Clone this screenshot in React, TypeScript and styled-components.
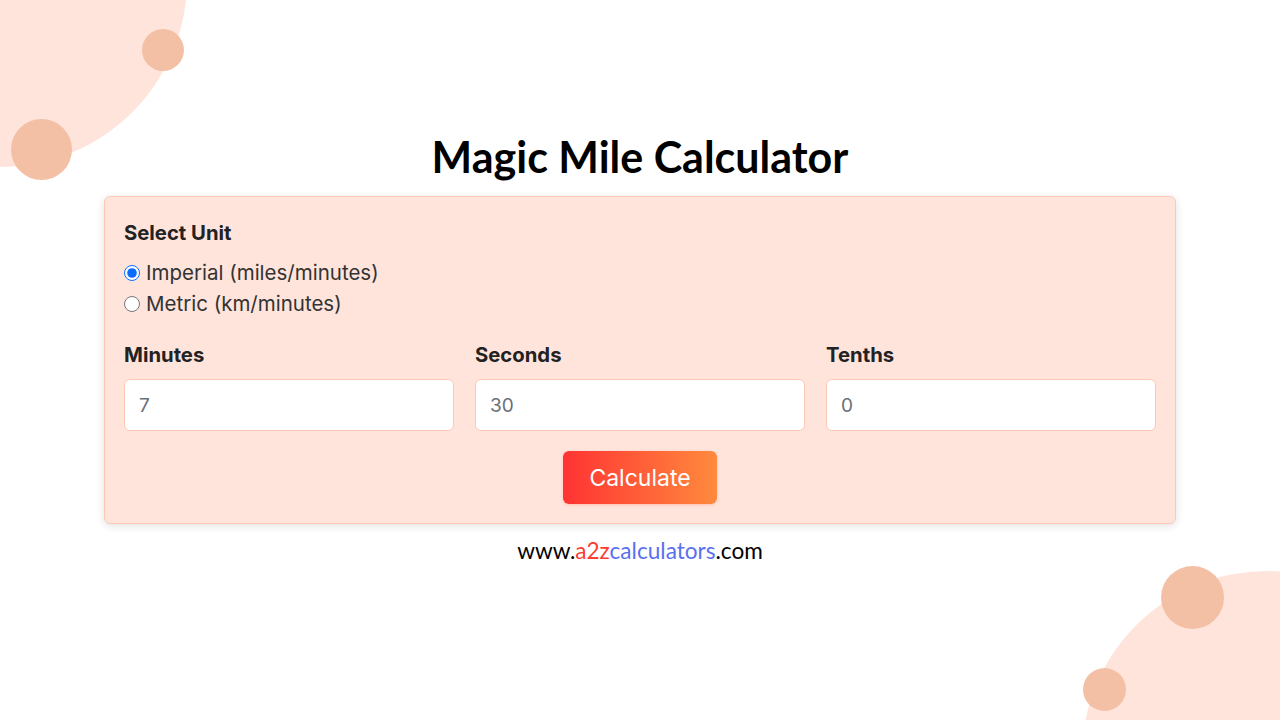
import React, { useState } from 'react'
import styled, { createGlobalStyle } from 'styled-components'

const GlobalStyle = createGlobalStyle`
  html, body {
    margin: 0;
    padding: 0;
    background: #ffffff;
    overflow: hidden;
  }
  * { box-sizing: border-box; }
`;

const App = () => {
  const [unit, setUnit] = useState('imperial')
  const [minutes, setMinutes] = useState('7')
  const [seconds, setSeconds] = useState('30')
  const [tenths, setTenths] = useState('0')

  return (
    <Page>
      <GlobalStyle />
      <Blob $size={374} $x={-187} $y={-207} $tone='light' />
      <Blob $size={42} $x={142} $y={29} $tone='dark' />
      <Blob $size={61} $x={11} $y={119} $tone='dark' />
      <Blob $size={370} $x={1082} $y={571} $tone='light' />
      <Blob $size={63} $x={1161} $y={566} $tone='dark' />
      <Blob $size={43} $x={1083} $y={668} $tone='dark' />

      <Main>
        <Title>Magic Mile Calculator</Title>
        <Card>
          <SectionLabel>Select Unit</SectionLabel>
          <RadioGroup>
            <RadioRow>
              <Radio
                type='radio'
                name='unit'
                checked={unit === 'imperial'}
                onChange={() => setUnit('imperial')}
              />
              Imperial (miles/minutes)
            </RadioRow>
            <RadioRow>
              <Radio
                type='radio'
                name='unit'
                checked={unit === 'metric'}
                onChange={() => setUnit('metric')}
              />
              Metric (km/minutes)
            </RadioRow>
          </RadioGroup>

          <Fields>
            <Field>
              <FieldLabel>Minutes</FieldLabel>
              <Input value={minutes} onChange={e => setMinutes(e.target.value)} />
            </Field>
            <Field>
              <FieldLabel>Seconds</FieldLabel>
              <Input value={seconds} onChange={e => setSeconds(e.target.value)} />
            </Field>
            <Field>
              <FieldLabel>Tenths</FieldLabel>
              <Input value={tenths} onChange={e => setTenths(e.target.value)} />
            </Field>
          </Fields>

          <Actions>
            <CalcButton type='button'>Calculate</CalcButton>
          </Actions>
        </Card>

        <Footer>
          www.<span className='red'>a2z</span><span className='blue'>calculators</span>.com
        </Footer>
      </Main>
    </Page>
  )
}

const Page = styled.div`
  position: relative;
  width: 1280px;
  height: 720px;
  overflow: hidden;
  background: #fff;
`;

const Blob = styled.div<{ $size: number; $x: number; $y: number; $tone: 'light' | 'dark' }>`
  position: absolute;
  left: ${p => p.$x}px;
  top: ${p => p.$y}px;
  width: ${p => p.$size}px;
  height: ${p => p.$size}px;
  border-radius: 50%;
  background: ${p => (p.$tone === 'light' ? '#fee4da' : '#f4c0a5')};
`;

const Main = styled.main`
  position: relative;
  display: flex;
  flex-direction: column;
  align-items: center;
  padding-top: 132px;
`;

const Title = styled.h1`
  margin: 0 0 15px;
  font-family: 'Lato', 'Open Sans', sans-serif;
  font-weight: 700;
  font-size: 43px;
  line-height: 49px;
  color: #000;
`;

const Card = styled.section`
  width: 1072px;
  padding: 24px 19px 19px;
  background: #ffe4dc;
  border: 1px solid #fcc9b6;
  border-radius: 6px;
  box-shadow: 0 2px 8px rgba(0, 0, 0, 0.12);
  font-family: 'Inter', 'Liberation Sans', sans-serif;
`;

const SectionLabel = styled.div`
  font-size: 20.3px;
  font-weight: 700;
  line-height: 24px;
  color: #222;
`;

const RadioGroup = styled.div`
  margin-top: 12px;
  display: flex;
  flex-direction: column;
`;

const RadioRow = styled.label`
  display: flex;
  align-items: center;
  height: 31px;
  font-size: 20.5px;
  color: #333;
  cursor: pointer;
`;

const Radio = styled.input`
  width: 16px;
  height: 16px;
  margin: 0 6px 0 0;
  accent-color: #0b6cff;
`;

const Fields = styled.div`
  margin-top: 24px;
  display: grid;
  grid-template-columns: repeat(3, 1fr);
  column-gap: 21px;
`;

const Field = styled.div`
  display: flex;
  flex-direction: column;
  gap: 12px;
`;

const FieldLabel = styled.label`
  font-size: 20.3px;
  font-weight: 700;
  line-height: 24px;
  color: #222;
`;

const Input = styled.input`
  height: 52px;
  padding: 0 14px;
  border: 1px solid #fcc9b6;
  border-radius: 6px;
  background: #fff;
  font-family: 'Inter', 'Liberation Sans', sans-serif;
  font-size: 19px;
  color: #6b6f78;
  outline: none;
`;

const Actions = styled.div`
  display: flex;
  justify-content: center;
  margin-top: 20px;
`;

const CalcButton = styled.button`
  width: 154px;
  height: 53px;
  border: none;
  border-radius: 6px;
  background: linear-gradient(90deg, #ff3333 0%, #ff8a3d 100%);
  color: #fff;
  font-family: 'Inter', 'Liberation Sans', sans-serif;
  font-size: 23px;
  cursor: pointer;
  box-shadow: 0 1px 3px rgba(255, 80, 40, 0.25);
`;

const Footer = styled.p`
  margin: 15px 0 0;
  font-family: 'Lato', 'Open Sans', sans-serif;
  font-size: 22.6px;
  line-height: 24px;
  color: #000;

  .red { color: #ff3b2f; }
  .blue { color: #5a6ff0; }
`;

export default App
